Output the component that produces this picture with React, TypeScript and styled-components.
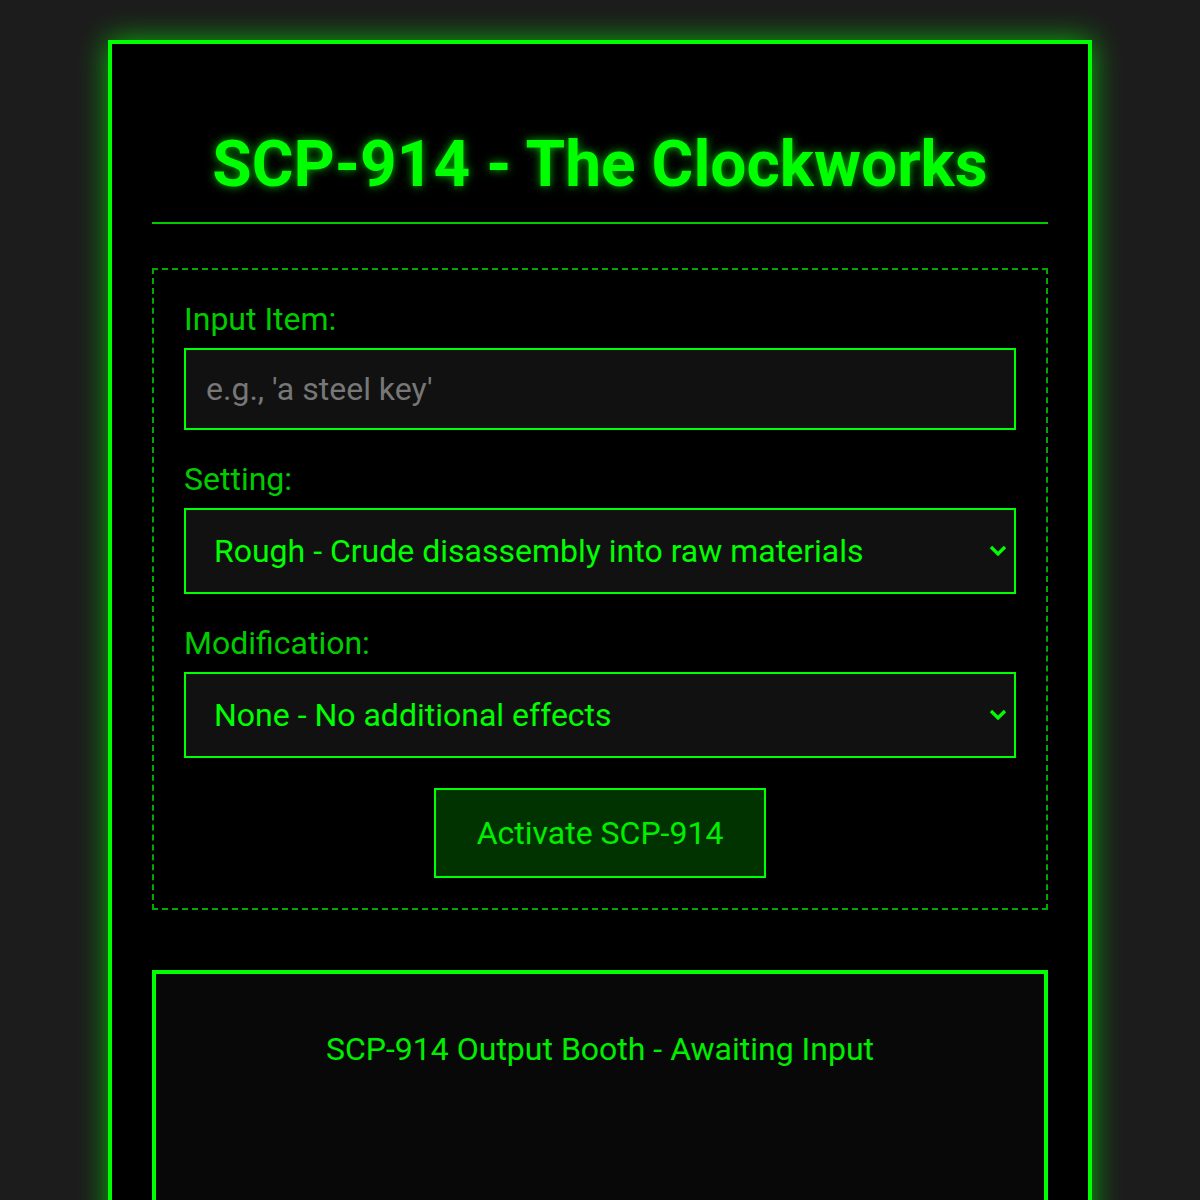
import * as React from 'react';
import styled, { createGlobalStyle } from 'styled-components';

const GlobalStyle = createGlobalStyle`
  * {
    box-sizing: border-box;
  }
  body {
    margin: 0;
    background: #1c1c1c;
    font-family: Roboto, 'Liberation Sans', sans-serif;
    color: #00ff00;
  }
`;

const Container = styled.div`
  width: 984px;
  margin: 40px auto 0;
  padding: 40px;
  background: #000000;
  border: 4px solid #00ff00;
  box-shadow: 0 0 28px rgba(0, 255, 0, 0.65);
`;

const Title = styled.h1`
  margin: 43px 0 44px;
  padding-bottom: 20px;
  border-bottom: 2px solid #00cc00;
  font-size: 64px;
  font-weight: 700;
  text-align: center;
  color: #00ff00;
  text-shadow: 0 0 10px rgba(0, 255, 0, 0.7);
`;

const ControlPanel = styled.div`
  padding: 30px;
  border: 2px dashed #00aa00;
  display: flex;
  flex-direction: column;
`;

const Field = styled.div`
  display: flex;
  flex-direction: column;
  margin-bottom: 30px;
`;

const Label = styled.label`
  font-size: 32px;
  color: #00cc00;
  margin-bottom: 10px;
`;

const TextInput = styled.input`
  width: 100%;
  padding: 20px;
  font-family: Roboto, 'Liberation Sans', sans-serif;
  font-size: 32px;
  color: #00ff00;
  background: #111111;
  border: 2px solid #00ff00;
  outline: none;

  &::placeholder {
    color: #777777;
  }
`;

const SelectWrap = styled.div`
  position: relative;
`;

const Select = styled.select`
  appearance: none;
  width: 100%;
  height: 86px;
  padding: 20px 50px 20px 28px;
  font-family: Roboto, 'Liberation Sans', sans-serif;
  font-size: 32px;
  color: #00ff00;
  background: #111111;
  border: 2px solid #00ff00;
  border-radius: 0;
  outline: none;
`;

const Chevron = styled.svg`
  position: absolute;
  right: 9px;
  top: 50%;
  margin-top: -6px;
  pointer-events: none;
`;

const ActivateButton = styled.button`
  align-self: center;
  padding: 24px 41px;
  font-family: Roboto, 'Liberation Sans', sans-serif;
  font-size: 32px;
  color: #00ee00;
  background: #003300;
  border: 2px solid #00ff00;
  cursor: pointer;
`;

const OutputBooth = styled.div`
  margin-top: 60px;
  min-height: 300px;
  padding: 56px 40px;
  background: #080808;
  border: 4px solid #00ff00;
  text-align: center;
  font-size: 32px;
  color: #00ee00;
`;

function Dropdown({
  id,
  value,
  onChange,
  options,
}: {
  id: string;
  value: string;
  onChange: (v: string) => void;
  options: { value: string; label: string }[];
}) {
  return (
    <SelectWrap>
      <Select id={id} value={value} onChange={e => onChange(e.target.value)}>
        {options.map(o => (
          <option key={o.value} value={o.value}>
            {o.label}
          </option>
        ))}
      </Select>
      <Chevron width="18" height="12" viewBox="0 0 18 12">
        <path d="M2 2 L9 9 L16 2" fill="none" stroke="#00ff00" strokeWidth="3.2" />
      </Chevron>
    </SelectWrap>
  );
}

const settings = [
  { value: 'rough', label: 'Rough - Crude disassembly into raw materials' },
  { value: 'coarse', label: 'Coarse - Separation into components' },
  { value: '1to1', label: '1:1 - Exchange for item of equal value' },
  { value: 'fine', label: 'Fine - Refinement and improvement' },
  { value: 'veryfine', label: 'Very Fine - Extreme refinement' },
];

const mods = [
  { value: 'none', label: 'None - No additional effects' },
  { value: 'anomalous', label: 'Anomalous - Unpredictable properties' },
];

export default function App() {
  const [item, setItem] = React.useState('');
  const [setting, setSetting] = React.useState('rough');
  const [mod, setMod] = React.useState('none');

  return (
    <>
      <GlobalStyle />
      <Container>
        <Title>SCP-914 - The Clockworks</Title>
        <ControlPanel>
          <Field>
            <Label htmlFor="item">Input Item:</Label>
            <TextInput
              id="item"
              value={item}
              onChange={e => setItem(e.target.value)}
              placeholder="e.g., 'a steel key'"
            />
          </Field>
          <Field>
            <Label htmlFor="setting">Setting:</Label>
            <Dropdown id="setting" value={setting} onChange={setSetting} options={settings} />
          </Field>
          <Field>
            <Label htmlFor="mod">Modification:</Label>
            <Dropdown id="mod" value={mod} onChange={setMod} options={mods} />
          </Field>
          <ActivateButton>Activate SCP-914</ActivateButton>
        </ControlPanel>
        <OutputBooth>SCP-914 Output Booth - Awaiting Input</OutputBooth>
      </Container>
    </>
  );
}
